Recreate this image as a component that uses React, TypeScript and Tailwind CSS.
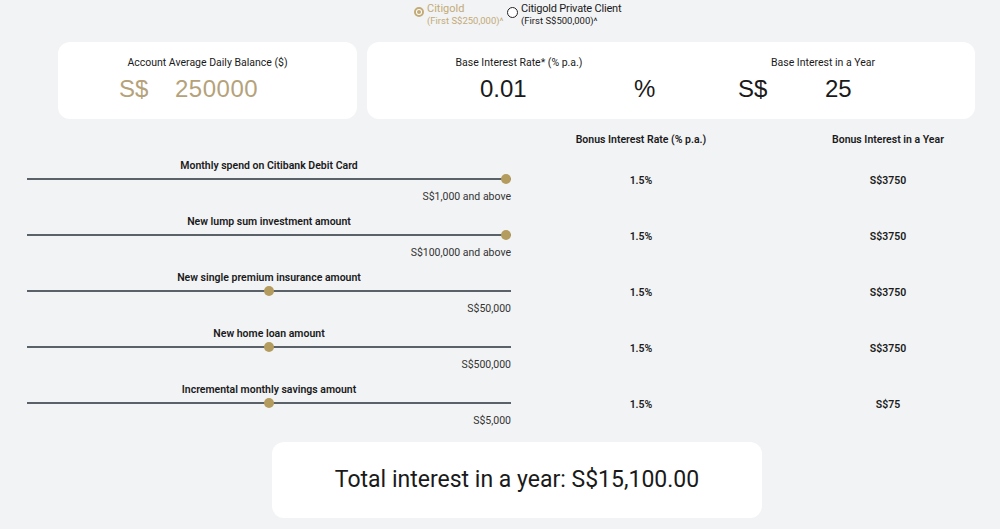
import React from "react";

const rows = [
  { label: "Monthly spend on Citibank Debit Card", value: "S$1,000 and above", pos: 1, rate: "1.5%", year: "S$3750" },
  { label: "New lump sum investment amount", value: "S$100,000 and above", pos: 1, rate: "1.5%", year: "S$3750" },
  { label: "New single premium insurance amount", value: "S$50,000", pos: 0.5, rate: "1.5%", year: "S$3750" },
  { label: "New home loan amount", value: "S$500,000", pos: 0.5, rate: "1.5%", year: "S$3750" },
  { label: "Incremental monthly savings amount", value: "S$5,000", pos: 0.5, rate: "1.5%", year: "S$75" },
];

function Slider({ pos }: { pos: number }) {
  return (
    <div className="relative h-[12px]">
      <div className="absolute left-0 right-0 top-[5px] h-[2px] bg-[#5b6169]" />
      <div
        className="absolute top-[1px] h-[10px] w-[10px] rounded-full bg-[#b49c5e]"
        style={{ left: `calc((100% - 10px) * ${pos})` }}
      />
    </div>
  );
}

export default function App() {
  return (
    <div className="h-[529px] w-[1000px] overflow-hidden bg-[#f2f3f5] font-['Roboto',sans-serif] text-[#1a1a1a]">
      {/* plan radios */}
      <div className="flex h-[42px] pl-[414px] pt-[3px] text-[11px] leading-[12px]">
        <div className="flex w-[93px] gap-[3px]">
          <span className="mt-[4px] flex h-[10px] w-[10px] shrink-0 items-center justify-center rounded-full border-2 border-[#c2ab77] bg-white">
            <span className="h-[4px] w-[4px] rounded-full bg-[#c2ab77]" />
          </span>
          <div className="text-[#c2ab77]">
            <div>Citigold</div>
            <div className="text-[9.5px]">(First S$250,000)^</div>
          </div>
        </div>
        <div className="flex gap-[3px]">
          <span className="mt-[4px] h-[11px] w-[11px] shrink-0 rounded-full border border-[#222] bg-white" />
          <div>
            <div className="tracking-[-0.2px]">Citigold Private Client</div>
            <div className="text-[9.5px]">(First S$500,000)^</div>
          </div>
        </div>
      </div>

      {/* balance + base interest */}
      <div className="flex gap-[10px] pl-[58px]">
        <div className="h-[77px] w-[299px] rounded-[12px] bg-white pt-[14px]">
          <div className="text-center text-[10.5px] leading-[14px]">Account Average Daily Balance ($)</div>
          <div className="mt-[5px] flex h-[28px] items-center pl-[61px] font-['Liberation_Sans',sans-serif] text-[24px] text-[#b5a27a]">
            <span className="w-[56px]">S$</span>
            <span className="tracking-[0.5px]">250000</span>
          </div>
        </div>
        <div className="flex h-[77px] w-[608px] rounded-[12px] bg-white pt-[14px]">
          <div className="w-1/2">
            <div className="text-center text-[10.5px] leading-[14px]">Base Interest Rate* (% p.a.)</div>
            <div className="mt-[5px] flex h-[28px] items-center pl-[113px] font-['Liberation_Sans',sans-serif] text-[24px]">
              <span className="w-[154px]">0.01</span>
              <span>%</span>
            </div>
          </div>
          <div className="w-1/2">
            <div className="text-center text-[10.5px] leading-[14px]">Base Interest in a Year</div>
            <div className="mt-[5px] flex h-[28px] items-center pl-[67px] font-['Liberation_Sans',sans-serif] text-[24px]">
              <span className="w-[87px]">S$</span>
              <span>25</span>
            </div>
          </div>
        </div>
      </div>

      {/* bonus table */}
      <div className="grid h-[33px] grid-cols-[484px_260px_1fr] pl-[27px] pt-[14px] text-[10.5px] font-semibold leading-[14px]">
        <div />
        <div className="text-center">Bonus Interest Rate (% p.a.)</div>
        <div className="pl-[5px] text-center">Bonus Interest in a Year</div>
      </div>
      {rows.map((r) => (
        <div key={r.label} className="grid h-[56px] grid-cols-[484px_260px_1fr] items-center pl-[27px] text-[10.5px] leading-[14px]">
          <div className="flex h-full flex-col pt-[7px]">
            <div className="text-center font-semibold">{r.label}</div>
            <Slider pos={r.pos} />
            <div className="mt-[5px] text-right text-[#333]">{r.value}</div>
          </div>
          <div className="pt-[2px] text-center font-semibold">{r.rate}</div>
          <div className="pl-[5px] pt-[2px] text-center font-semibold">{r.year}</div>
        </div>
      ))}

      {/* total */}
      <div className="ml-[272px] mt-[10px] flex h-[76px] w-[490px] items-center justify-center rounded-[12px] bg-white text-[23px]">
        Total interest in a year: S$15,100.00
      </div>
    </div>
  );
}
